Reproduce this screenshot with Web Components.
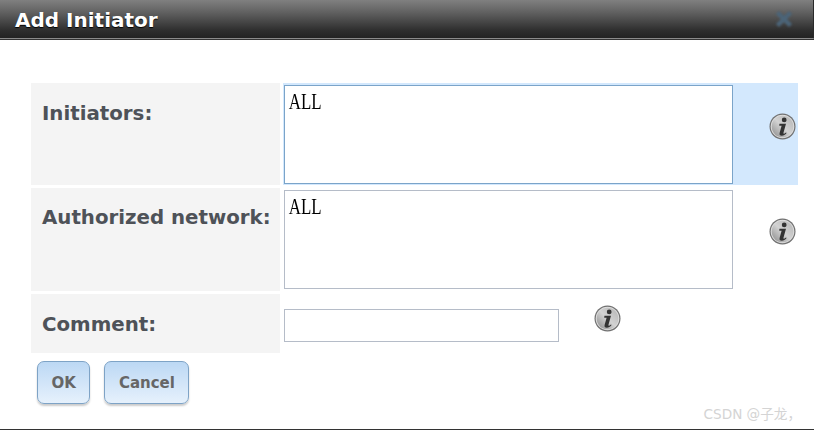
<!DOCTYPE html>
<html>
<head>
<meta charset="utf-8">
<title>Add Initiator</title>
<style>
html, body { margin: 0; padding: 0; background: #fff; }
body { font-family: "DejaVu Sans", sans-serif; }
</style>
</head>
<body>
<add-initiator-dialog>
  <span slot="title">Add Initiator</span>
  <form-row label="Initiators:" height="102" active>
    <text-box value="ALL" focused></text-box>
    <info-icon></info-icon>
  </form-row>
  <form-row label="Authorized network:" height="103">
    <text-box value="ALL"></text-box>
    <info-icon></info-icon>
  </form-row>
  <form-row label="Comment:" height="59" short>
    <line-box></line-box>
    <info-icon></info-icon>
  </form-row>
  <dialog-button slot="buttons">OK</dialog-button>
  <dialog-button slot="buttons">Cancel</dialog-button>
</add-initiator-dialog>

<script>
class AddInitiatorDialog extends HTMLElement {
  constructor() {
    super();
    this.attachShadow({ mode: "open" }).innerHTML = `
<style>
:host { display: block; position: relative; width: 814px; height: 430px; box-sizing: border-box; border-bottom: 1px solid #333; overflow: hidden; background: #fff; }
.bar {
  height: 38px; display: flex; align-items: center; justify-content: space-between;
  padding: 0 20px 0 15px; border-right: 2px solid #2a2a2a;
  background: linear-gradient(#808080, #5e5e5e 35%, #2e2e2e 80%, #222);
  border-bottom: 1px solid #8a8a8a; box-shadow: 0 1px 0 #333;
  margin-right: -1px;
}
.title { font: bold 20px "DejaVu Sans", sans-serif; color: #fff; text-shadow: 0 1px 1px #000; position: relative; top: 1px; }
.close { width: 18px; height: 18px; display: block; filter: blur(0.9px); }
.body { padding: 44px 16px 0 31px; display: flex; flex-direction: column; gap: 3px; }
.buttons { display: flex; gap: 14px; padding: 8px 0 0 37px; }
.mark { position: absolute; right: 13px; bottom: 6px; font: 13.6px "DejaVu Sans", "Noto Sans CJK SC", sans-serif; color: #d4d4d4; }
</style>
<div class="bar">
  <div class="title"><slot name="title"></slot></div>
  <svg class="close" viewBox="0 0 18 18"><path d="M4 4L14 14M14 4L4 14" stroke="#4b6478" stroke-width="4.4" stroke-linecap="square"/></svg>
</div>
<div class="body"><slot></slot></div>
<div class="buttons"><slot name="buttons"></slot></div>
<div class="mark">CSDN @子龙，</div>`;
  }
}

class FormRow extends HTMLElement {
  constructor() {
    super();
    const root = this.attachShadow({ mode: "open" });
    const short = this.hasAttribute("short");
    const active = this.hasAttribute("active");
    root.innerHTML = `
<style>
:host { display: grid; grid-template-columns: 249px 515px; grid-template-rows: 100%; column-gap: 3px; height: ${this.getAttribute("height")}px; }
.label { background: #f4f4f4; padding: ${short || active ? 19 : 18}px 0 0 11px; box-sizing: border-box; font: bold 19.8px "DejaVu Sans", sans-serif; color: #4e5258; white-space: nowrap; }
.field { background: ${active ? "#d3e8fd" : "transparent"}; box-sizing: border-box; display: flex; align-items: flex-start; padding: ${short ? "0" : "2px"} 0 0 1px; gap: ${short ? 35 : 36}px; --info-top: ${short ? 11 : 28}px; --box-top: 15px; }
</style>
<div class="label">${this.getAttribute("label")}</div>
<div class="field"><slot></slot></div>`;
  }
}

class TextBox extends HTMLElement {
  constructor() {
    super();
    const border = this.hasAttribute("focused") ? "#7ba4c9" : "#b5bcc8";
    // reference text is a tall narrow serif, so the inner field is squeezed horizontally
    this.attachShadow({ mode: "open" }).innerHTML = `
<style>
:host { display: block; width: 449px; height: 99px; box-sizing: border-box; border: 1px solid ${border}; background: #fff; overflow: hidden; }
textarea { display: block; width: 590px; height: 97px; box-sizing: border-box; margin: 0; padding: 5px 5px; border: 0; background: transparent; color: #000; outline: 0; resize: none; overflow: hidden; font: 22.5px "Liberation Serif", serif; line-height: 22px; transform: scaleX(0.75); transform-origin: 0 0; }
</style>
<textarea readonly>${this.getAttribute("value")}</textarea>`;
  }
}

class LineBox extends HTMLElement {
  constructor() {
    super();
    this.attachShadow({ mode: "open" }).innerHTML = `
<style>
:host { display: block; width: 275px; height: 33px; margin-top: var(--box-top, 0); }
input { display: block; width: 100%; height: 100%; box-sizing: border-box; margin: 0; border: 1px solid #b5bcc8; background: #fff; outline: 0; }
</style>
<input type="text">`;
  }
}

class InfoIcon extends HTMLElement {
  constructor() {
    super();
    this.attachShadow({ mode: "open" }).innerHTML = `
<style>
:host { display: block; width: 27px; height: 27px; margin-top: var(--info-top, 28px); }
svg { display: block; filter: blur(0.5px); }
</style>
<svg width="27" height="27" viewBox="0 0 27 27">
  <defs>
    <linearGradient id="g" x1="0.1" y1="0.9" x2="0.9" y2="0.1"><stop offset="0" stop-color="#989898"/><stop offset="0.5" stop-color="#d2d2d2"/><stop offset="1" stop-color="#bababa"/></linearGradient>
  </defs>
  <circle cx="13.5" cy="13.5" r="13" fill="#707070"/>
  <circle cx="13.5" cy="13.5" r="11.8" fill="#dedede"/>
  <circle cx="13.5" cy="13.5" r="10.8" fill="url(#g)"/>
  <circle cx="15.2" cy="6.9" r="2.4" fill="#333"/>
  <path d="M10.4 10.8h6.6l-2.6 9.2c-.2.8.5 1 1.2.5l1.4-1.1.6.7c-1.4 1.7-3 2.7-4.8 2.7-1.9 0-2.6-1.1-2.2-2.8l2-7.2h-2.4z" fill="#333"/>
</svg>`;
  }
}

class DialogButton extends HTMLElement {
  constructor() {
    super();
    this.attachShadow({ mode: "open" }).innerHTML = `
<style>
:host { display: block; }
button { display: block; height: 43px; padding: 0 13.5px; box-sizing: border-box; border: 1px solid #7ea3c6; border-radius: 7px; background: linear-gradient(#bcd8f4, #e6f1fc); box-shadow: 0 2px 2px #ccc; color: #666; font: bold 15px "DejaVu Sans", sans-serif; }
</style>
<button><slot></slot></button>`;
  }
}

customElements.define("add-initiator-dialog", AddInitiatorDialog);
customElements.define("form-row", FormRow);
customElements.define("text-box", TextBox);
customElements.define("line-box", LineBox);
customElements.define("info-icon", InfoIcon);
customElements.define("dialog-button", DialogButton);
</script>
</body>
</html>
